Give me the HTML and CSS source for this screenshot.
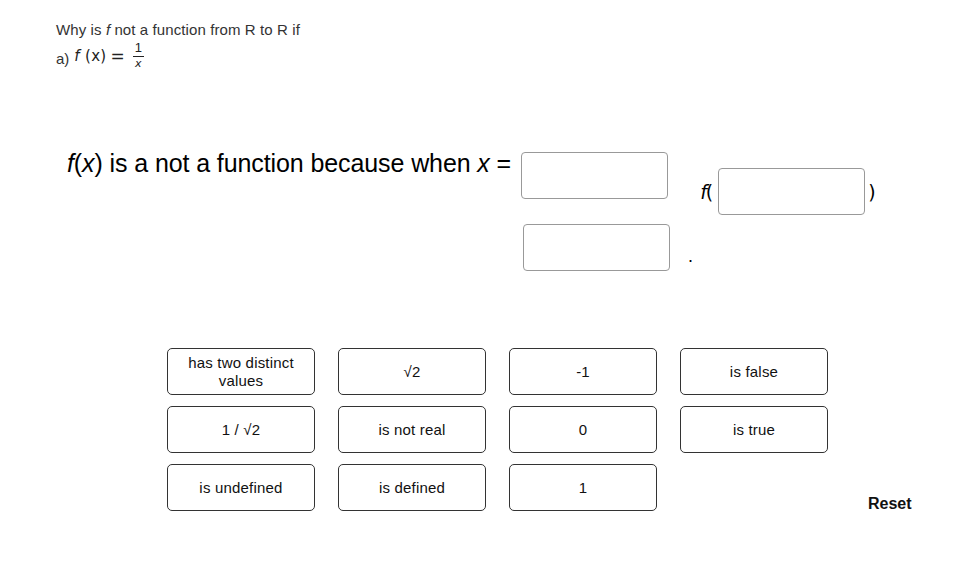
FILE: index.html
```html
<!DOCTYPE html>
<html lang="en">
<head>
    <meta charset="UTF-8">
    <meta name="viewport" content="width=device-width, initial-scale=1.0">
    <title>Function question</title>
    <link rel="stylesheet" href="styles.css">
</head>
<body>
    <div class="page">
        <div class="question">
            <div class="prompt">Why is <i>f</i> not a function from R to R if</div>
            <div class="part">
                <span class="part-label">a)</span>
                <span class="formula">
                    <span class="fx"><i>f</i>&nbsp;(x)</span>
                    <span class="eq">=</span>
                    <span class="frac"><span class="num">1</span><span class="den">x</span></span>
                </span>
            </div>
        </div>

        <!-- Fill in the blanks -->
        <div class="statement">
            <div class="line">
                <span class="lead"><i>f</i>(<i>x</i>) is a not a function because when <i>x</i> =</span>
                <div class="drop"></div>
                <div class="fcall">
                    <span class="fname"><i>f</i>(</span>
                    <div class="drop"></div>
                    <span class="fclose">)</span>
                </div>
            </div>
            <div class="line second">
                <div class="drop"></div>
                <span class="dot">.</span>
            </div>
        </div>

        <div class="bank">
            <div class="tiles">
                <div class="tile">has two distinct values</div>
                <div class="tile">&radic;2</div>
                <div class="tile">-1</div>
                <div class="tile">is false</div>
                <div class="tile">1 / &radic;2</div>
                <div class="tile">is not real</div>
                <div class="tile">0</div>
                <div class="tile">is true</div>
                <div class="tile">is undefined</div>
                <div class="tile">is defined</div>
                <div class="tile">1</div>
            </div>
            <button class="reset">Reset</button>
        </div>
    </div>
</body>
</html>
```

FILE: styles.css
```css
body {
    margin: 0;
    font-family: "Liberation Sans", Arial, sans-serif;
    background-color: #fff;
    color: #000;
}

.page {
    width: 977px;
    height: 575px;
    position: relative;
}

.question {
    padding: 21px 0 0 56px;
    color: #333;
    font-size: 15px;
}

.prompt {
    line-height: 18px;
    letter-spacing: 0.1px;
}

.part {
    display: flex;
    align-items: flex-end;
    gap: 5px;
    margin-top: 1px;
    height: 28px;
}

.part-label {
    font-size: 15px;
    line-height: 18px;
}

.formula {
    font-family: "DejaVu Sans", sans-serif;
    font-size: 15px;
    display: flex;
    align-items: center;
    color: #222;
    height: 28px;
}

.fx {
    line-height: 16px;
    margin-top: 3px;
    letter-spacing: 0.3px;
}

.eq {
    margin: 3px 8px 0 4px;
    font-size: 17px;
    line-height: 16px;
}

.frac {
    display: inline-flex;
    flex-direction: column;
    align-items: center;
    margin-top: 2px;
}

.num {
    border-bottom: 1px solid #222;
    padding: 0 2px 1px;
    font-family: "Liberation Sans", Arial, sans-serif;
    font-size: 13px;
    line-height: 14px;
}

.den {
    font-style: italic;
    font-size: 11px;
    line-height: 13px;
}

.statement {
    margin-top: 82px;
    padding-left: 67px;
}

.line {
    display: flex;
    align-items: flex-start;
}

.lead {
    font-size: 25px;
    line-height: 26px;
    letter-spacing: -0.1px;
}

.drop {
    width: 145px;
    height: 45px;
    border: 1px solid #999;
    border-radius: 4px;
    background: #fff;
}

.line .lead + .drop {
    margin-left: 10px;
    margin-top: 2px;
}

.fcall {
    display: flex;
    align-items: center;
    margin-left: 32px;
    margin-top: 18px;
}

.fname,
.fclose {
    font-family: "DejaVu Sans", sans-serif;
    font-size: 19px;
}

.fname {
    margin-right: 6px;
    letter-spacing: -1px;
}

.fclose {
    margin-left: 3px;
}

.second {
    margin-top: 9px;
    margin-left: 456px;
    align-items: flex-end;
}

.dot {
    font-size: 18px;
    margin-left: 18px;
    line-height: 18px;
    margin-bottom: 6px;
}

.bank {
    margin-top: 77px;
    padding-left: 167px;
}

.tiles {
    display: grid;
    grid-template-columns: repeat(4, 148px);
    grid-auto-rows: 47px;
    column-gap: 23px;
    row-gap: 11px;
}

.tile {
    border: 1px solid #333;
    border-radius: 5px;
    display: flex;
    align-items: center;
    justify-content: center;
    text-align: center;
    font-size: 15px;
    line-height: 18px;
    letter-spacing: 0.2px;
    padding: 0 16px;
    color: #111;
    box-sizing: border-box;
}

.reset {
    position: absolute;
    left: 868px;
    top: 495px;
    background: none;
    border: none;
    padding: 0;
    font-family: "Liberation Sans", Arial, sans-serif;
    font-weight: bold;
    font-size: 16px;
    color: #111;
    cursor: pointer;
}
```
